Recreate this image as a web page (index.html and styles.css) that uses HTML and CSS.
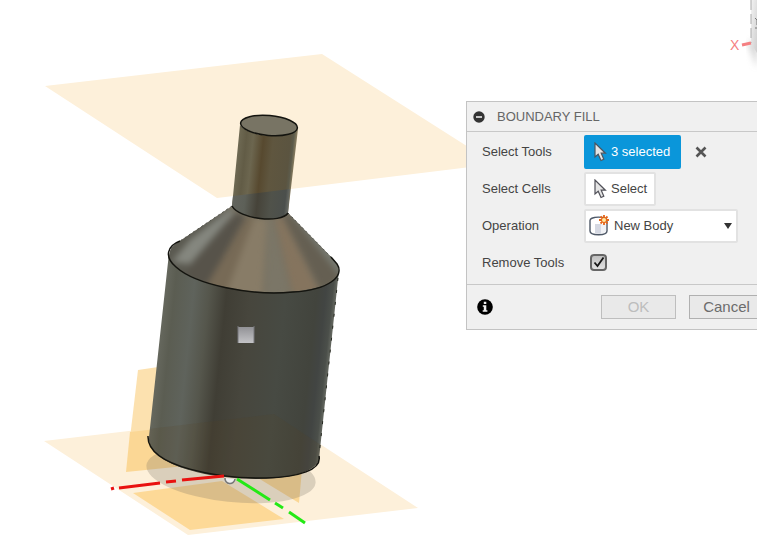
FILE: index.html
```html
<!DOCTYPE html>
<html lang="en">
<head>
<meta charset="utf-8">
<meta name="viewport" content="width=device-width, initial-scale=1">
<title>Boundary Fill</title>
<link rel="stylesheet" href="styles.css">
</head>
<body>
<main class="workspace">
  <svg class="scene" viewBox="0 0 757 550" preserveAspectRatio="xMinYMin slice" role="img" aria-label="Model with work planes">
    <defs>
      <linearGradient id="body" gradientUnits="userSpaceOnUse" x1="158" y1="350" x2="330" y2="368">
        <stop offset="0" stop-color="#66685e"/><stop offset=".06" stop-color="#5b5d52"/>
        <stop offset=".17" stop-color="#5f635c"/><stop offset=".26" stop-color="#55564c"/>
        <stop offset=".36" stop-color="#403e35"/><stop offset=".5" stop-color="#47463d"/>
        <stop offset=".7" stop-color="#474a43"/><stop offset=".88" stop-color="#42443d"/>
        <stop offset=".93" stop-color="#424543"/><stop offset=".97" stop-color="#4b4f4a"/>
        <stop offset="1" stop-color="#70736a"/>
      </linearGradient>
      <linearGradient id="neck" gradientUnits="userSpaceOnUse" x1="236" y1="165" x2="293" y2="171">
        <stop offset="0" stop-color="#6e6953"/><stop offset=".13" stop-color="#625c46"/>
        <stop offset=".25" stop-color="#6c664f"/><stop offset=".43" stop-color="#57492f"/>
        <stop offset=".6" stop-color="#5f563f"/><stop offset=".9" stop-color="#5b5440"/>
        <stop offset=".95" stop-color="#5c5b4b"/><stop offset="1" stop-color="#857a5e"/>
      </linearGradient>
      <linearGradient id="neckLow" gradientUnits="userSpaceOnUse" x1="233" y1="203" x2="290" y2="209">
        <stop offset="0" stop-color="#62645d"/><stop offset=".2" stop-color="#5d6058"/>
        <stop offset=".42" stop-color="#464339"/><stop offset=".65" stop-color="#50524a"/>
        <stop offset=".9" stop-color="#4b4f4c"/><stop offset="1" stop-color="#777971"/>
      </linearGradient>
      <linearGradient id="handle" x1="0" y1="0" x2="0" y2="1">
        <stop offset="0" stop-color="#929296"/><stop offset="1" stop-color="#c3c3c6"/>
      </linearGradient>
      <linearGradient id="cubeFace" x1="0" y1="0" x2="1" y2="1">
        <stop offset="0" stop-color="#f3f3f3"/><stop offset="1" stop-color="#cfcfcf"/>
      </linearGradient>
      <filter id="soft" x="-20%" y="-20%" width="140%" height="140%" color-interpolation-filters="sRGB"><feGaussianBlur stdDeviation="3"/></filter>
      <clipPath id="shoulderClip"><path d="M232 206C240 217 278 224 288 213L331 257Q341 267 338 275C326 299 213 300 172 264Q164 250 180 241Z"/></clipPath>
      <clipPath id="bodyClip"><path d="M169 253C173 285 310 309 339 270L319 459C312 493 145 482 149 437Z"/></clipPath>
    </defs>

    <polygon points="45,86 322,54 495,164 217,198" fill="#fdf0da"/>
    <polygon points="44,441 274,414 418,508 188,535" fill="#fdf0da"/>
    <polygon points="138,370 165,366 160,438 130,438" fill="#fce1af"/>
    <polygon points="130,432 165,428 185,466 126,472" fill="#fbd795"/>
    <polygon points="250,470 302,469 299,503 258,478" fill="#fbd795"/>
    <polygon points="133,493 222,481 284,519 190,530" fill="#fdd997"/>
    <ellipse cx="231" cy="474" rx="85" ry="28" transform="rotate(6 231 474)" fill="#756b60" fill-opacity=".25"/>

    <path d="M169 253C173 285 310 309 339 270L319 459C312 493 145 482 149 437Z" fill="url(#body)"/>
    <polygon points="140,430 274,414 330,451 320,490 140,490" fill="#584420" fill-opacity=".15" clip-path="url(#bodyClip)"/>
    <path d="M338 278L319 456" fill="none" stroke="#25271f" stroke-width="1" stroke-dasharray="3 9"/>
    <path d="M148 436C147 468 224 479 266 478C299 477 322 470 319 456" fill="none" stroke="#14140f" stroke-width="1.5"/>

    <g clip-path="url(#shoulderClip)">
      <rect x="160" y="200" width="190" height="100" fill="#787262"/>
      <g filter="url(#soft)">
        <polygon points="232,206 212,290 150,280 160,240" fill="#5a5950"/>
        <polygon points="230,209 235,212 190,264 172,262 190,240" fill="#85877f"/>
        <polygon points="236,212 246,216 207,287 184,275" fill="#57534a"/>
        <polygon points="247,216 257,218 228,294 205,288" fill="#776a56"/>
        <polygon points="254,218 267,219 262,298 226,294" fill="#887c67"/>
        <polygon points="268,219 273,219 290,296 266,298" fill="#7b7667"/>
        <polygon points="275,219 282,217 319,292 294,298" fill="#85745e"/>
        <polygon points="283,217 289,213 350,270 322,292" fill="#655f52"/>
        <polygon points="290,213 294,212 350,264 340,276" fill="#767970"/>
      </g>
    </g>
    <path d="M232 206L180 241M288 213L331 257" fill="none" stroke="#55564f" stroke-width="1" stroke-dasharray="2 3"/>
    <path d="M180 241C167 246 164 257 176 267C196 285 251 296 293 292C329 290 345 276 337 264L331 257" fill="none" stroke="#14140f" stroke-width="1.5"/>

    <path d="M240 125C249 137 286 140 298 129L288 213C278 224 241 219 232 206Z" fill="url(#neck)"/>
    <path d="M233 196L290 189L288 213C278 224 241 219 232 206Z" fill="url(#neckLow)"/>
    <path d="M232 206C239 219 281 224 288 213" fill="none" stroke="#14140f" stroke-width="1.5"/>
    <ellipse cx="269" cy="125.5" rx="28.5" ry="10" transform="rotate(5 269 125.5)" fill="#787464" stroke="#14140f" stroke-width="1.5"/>

    <rect x="238" y="327" width="16" height="16" fill="url(#handle)"/>
    <path d="M238 326v17M254 326v17" stroke="#76767a" stroke-width="1"/>

    <path d="M225 478A5 5 0 0 0 235 479" fill="#eee" stroke="#777" stroke-width="1.5"/>
    <path d="M111 489l3 -1M119 488L160 483M166 482L176 481M182 480L224 476" stroke="#e91210" stroke-width="3" fill="none"/>
    <path d="M237 479L270 500M275 503L283 508M289 512L305 523" stroke="#24e916" stroke-width="3" fill="none"/>

    <path d="M748 43L757 68V40Z" fill="#777" fill-opacity=".35" filter="url(#soft)"/>
    <path d="M751 0H757V53L751 43Z" fill="url(#cubeFace)"/>
    <path d="M751 0V43" stroke="#aaa" stroke-width="1" stroke-dasharray="10 4"/>
    <path d="M755 18l2 2v5M755 28h2" stroke="#777" stroke-width="1" fill="none"/>
    <path d="M742 45L751 43" stroke="#f58082" stroke-width="3"/>
    <text class="axis-label" x="730" y="50">X</text>
  </svg>

  <form class="dialog" aria-labelledby="dialog-title">
    <header class="dialog-header">
      <button class="icon-button" type="button" aria-label="Collapse">
        <svg width="12" height="12" viewBox="0 0 12 12"><circle cx="6" cy="6" r="5.7" fill="#333"/><path d="M3 6H9" stroke="#eee" stroke-width="1.6"/></svg>
      </button>
      <h1 class="dialog-title" id="dialog-title">BOUNDARY FILL</h1>
    </header>

    <div class="fields">
      <div class="row">
        <label class="row-label" for="tools">Select Tools</label>
        <button class="picker picker-active" id="tools" type="button">
          <svg class="cursor" width="14" height="20" viewBox="0 0 14 20"><path d="M2 1V15L5.2 12.3L8 18.5L10.8 17.2L8.2 11.2H12.4Z" fill="#e5e5e5" stroke="#4b5660" stroke-width="1.2"/></svg>
          <span>3 selected</span>
        </button>
        <button class="icon-button clear" type="button" aria-label="Clear selection">
          <svg width="12" height="12" viewBox="0 0 12 12"><path d="M1.5 1.5L10.5 10.5M10.5 1.5L1.5 10.5" stroke="#555" stroke-width="2.6"/></svg>
        </button>
      </div>
      <div class="row">
        <label class="row-label" for="cells">Select Cells</label>
        <button class="picker" id="cells" type="button">
          <svg class="cursor" width="14" height="20" viewBox="0 0 14 20"><path d="M2 1V15L5.2 12.3L8 18.5L10.8 17.2L8.2 11.2H12.4Z" fill="#e5e5e5" stroke="#505058" stroke-width="1.2"/></svg>
          <span>Select</span>
        </button>
      </div>
      <div class="row">
        <label class="row-label" for="operation">Operation</label>
        <div class="combo">
          <select class="combo-select" id="operation"><option>New Body</option></select>
          <svg class="combo-icon" width="22" height="22" viewBox="0 0 22 22">
            <path d="M2 5.5V16C2 21 19 21 19 16V5.5C19 1 2 1 2 5.5Z" fill="#fff" stroke="#4e5867" stroke-width="1.4"/>
            <path d="M7 9H13V18.5Q10 19 7 18.3Z" fill="#d5d8e2"/><path d="M13 9H18V16Q17 18 13 18.5Z" fill="#f0f1f5"/>
            <path d="M16 0V10M11 5H21M12.5 1.5L19.5 8.5M19.5 1.5L12.5 8.5" stroke="#e66416" stroke-width="1.8"/>
            <circle cx="16" cy="5" r="2" fill="#ffe9a0"/>
          </svg>
          <svg class="combo-caret" width="8" height="6" viewBox="0 0 8 6"><path d="M0 0H8L4 6Z" fill="#333"/></svg>
        </div>
      </div>
      <div class="row">
        <label class="row-label" for="remove">Remove Tools</label>
        <div class="check">
          <input class="check-input" id="remove" type="checkbox" checked>
          <svg class="check-mark" width="12" height="12" viewBox="0 0 12 12"><path d="M1.5 6.5L4.5 10L10.5 1.5" fill="none" stroke="#161616" stroke-width="1.8"/></svg>
        </div>
      </div>
    </div>

    <footer class="dialog-footer">
      <button class="icon-button info" type="button" aria-label="Information">
        <svg width="16" height="16" viewBox="0 0 16 16"><circle cx="8" cy="8" r="7.8" fill="#000"/><path d="M6.8 2.8H9.3V5H6.8ZM5.8 6.3H9.3V11.2H10.4V12.8H5.7V11.2H6.8V7.8H5.8Z" fill="#f0f0f0"/></svg>
      </button>
      <button class="action" type="submit" disabled>OK</button>
      <button class="action" type="button">Cancel</button>
    </footer>
  </form>
</main>
</body>
</html>
```
FILE: styles.css
```css
* {
  box-sizing: border-box;
}

body {
  margin: 0;
  background: #fff;
  color: #444;
  font: 13px/16px "Liberation Sans", Arial, sans-serif;
}

button,
select {
  margin: 0;
  font: inherit;
  color: inherit;
}

svg {
  display: block;
  flex: none;
}

.workspace {
  position: relative;
  height: 100vh;
  overflow: hidden;
}

.scene {
  width: 100%;
  height: 100%;
}

.axis-label {
  fill: #f58082;
  font-size: 14px;
}

/* The dialog floats over the canvas and runs past its right edge. */
.dialog {
  position: absolute;
  top: 101px;
  right: -20px;
  width: 311px;
  border: 1px solid #c3c3c3;
  background: #f0f0f0;
}

.dialog-header {
  display: flex;
  align-items: center;
  gap: 12px;
  height: 30px;
  padding-left: 6px;
  border-bottom: 1px solid #c8c8c8;
}

.dialog-title {
  margin: 0;
  color: #666;
  font-size: 13px;
  font-weight: 400;
}

.icon-button {
  padding: 0;
  border: 0;
  background: none;
}

.fields {
  display: grid;
  grid-auto-rows: 37px;
  padding: 1px 0 3px 15px;
}

.row {
  display: flex;
  align-items: center;
}

.row-label {
  width: 102px;
}

.picker {
  display: flex;
  align-items: center;
  gap: 4px;
  height: 34px;
  padding: 0 7px;
  border: 2px solid #e2e2e2;
  border-radius: 2px;
  background: #fff;
}

.picker-active {
  padding-right: 9px;
  border-color: #0a96da;
  background: #0a96da;
  color: #fff;
}

.clear {
  margin-left: 14px;
}

.combo {
  position: relative;
  width: 154px;
}

.combo-select {
  display: block;
  width: 100%;
  height: 34px;
  padding: 0 24px 0 28px;
  border: 2px solid #e2e2e2;
  border-radius: 2px;
  background: #fff;
  appearance: none;
}

.combo-icon {
  position: absolute;
  top: 6px;
  left: 4px;
  pointer-events: none;
}

.combo-caret {
  position: absolute;
  top: 14px;
  right: 6px;
  pointer-events: none;
}

.check {
  position: relative;
  margin-left: 6px;
}

.check-input {
  display: block;
  width: 17px;
  height: 17px;
  margin: 0;
  border: 2px solid #666;
  border-radius: 4px;
  background: linear-gradient(#c0c0c0, #e2e2e2);
  appearance: none;
}

.check-mark {
  position: absolute;
  top: 2px;
  left: 3px;
  visibility: hidden;
  pointer-events: none;
}

.check-input:checked + .check-mark {
  visibility: visible;
}

.dialog-footer {
  display: flex;
  align-items: center;
  gap: 13px;
  height: 45px;
  padding: 0 12px 0 10px;
  border-top: 1px solid #c8c8c8;
}

.info {
  margin-right: auto;
}

.action {
  width: 75px;
  height: 24px;
  padding: 0;
  border: 1px solid #b0b0b0;
  background: #e9e9e9;
  color: #6c6c6c;
  font-size: 15px;
}

.action:disabled {
  border-color: #bebebe;
  color: #bdbdbd;
}
```
